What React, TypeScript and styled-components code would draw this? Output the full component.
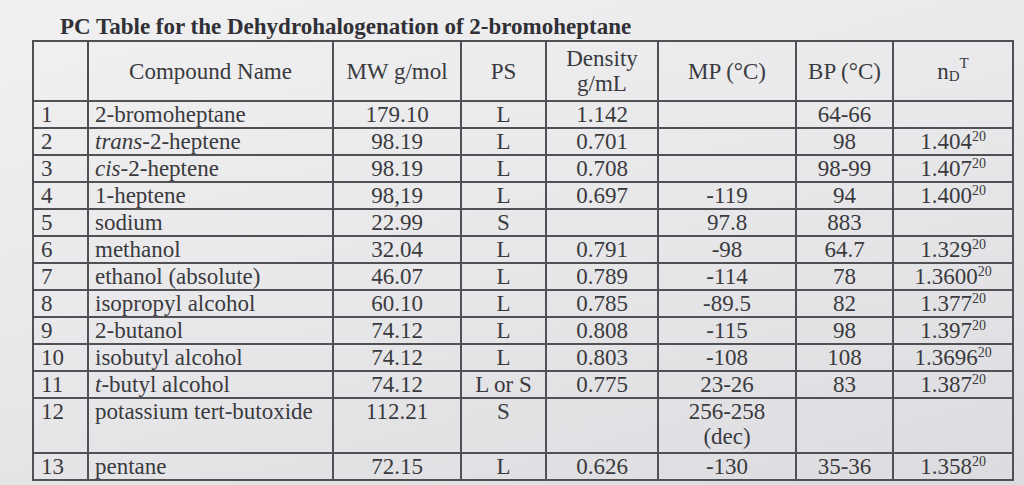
import React from 'react';
import styled, { createGlobalStyle } from 'styled-components';

const GlobalStyle = createGlobalStyle`
    html, body {
        margin: 0;
        padding: 0;
    }
    body {
        background: linear-gradient(165deg, #f1f1f2 0%, #e8e8ea 50%, #dcdce0 100%);
        font-family: 'Liberation Serif', 'Times New Roman', serif;
        color: #333;
        width: 1024px;
        height: 485px;
        overflow: hidden;
    }
`;

type Row = {
    no: string;
    name: React.ReactNode;
    mw: string;
    ps: string;
    density: string;
    mp: React.ReactNode;
    bp: string;
    nd: string;
    tall?: boolean;
};

const rows: Row[] = [
    { no: '1', name: '2-bromoheptane', mw: '179.10', ps: 'L', density: '1.142', mp: '', bp: '64-66', nd: '' },
    { no: '2', name: <><i>trans</i>-2-heptene</>, mw: '98.19', ps: 'L', density: '0.701', mp: '', bp: '98', nd: '1.404' },
    { no: '3', name: <><i>cis</i>-2-heptene</>, mw: '98.19', ps: 'L', density: '0.708', mp: '', bp: '98-99', nd: '1.407' },
    { no: '4', name: '1-heptene', mw: '98,19', ps: 'L', density: '0.697', mp: '-119', bp: '94', nd: '1.400' },
    { no: '5', name: 'sodium', mw: '22.99', ps: 'S', density: '', mp: '97.8', bp: '883', nd: '' },
    { no: '6', name: 'methanol', mw: '32.04', ps: 'L', density: '0.791', mp: '-98', bp: '64.7', nd: '1.329' },
    { no: '7', name: 'ethanol (absolute)', mw: '46.07', ps: 'L', density: '0.789', mp: '-114', bp: '78', nd: '1.3600' },
    { no: '8', name: 'isopropyl alcohol', mw: '60.10', ps: 'L', density: '0.785', mp: '-89.5', bp: '82', nd: '1.377' },
    { no: '9', name: '2-butanol', mw: '74.12', ps: 'L', density: '0.808', mp: '-115', bp: '98', nd: '1.397' },
    { no: '10', name: 'isobutyl alcohol', mw: '74.12', ps: 'L', density: '0.803', mp: '-108', bp: '108', nd: '1.3696' },
    { no: '11', name: <><i>t</i>-butyl alcohol</>, mw: '74.12', ps: 'L or S', density: '0.775', mp: '23-26', bp: '83', nd: '1.387' },
    { no: '12', name: 'potassium tert-butoxide', mw: '112.21', ps: 'S', density: '', mp: <>256-258<br />(dec)</>, bp: '', nd: '', tall: true },
    { no: '13', name: 'pentane', mw: '72.15', ps: 'L', density: '0.626', mp: '-130', bp: '35-36', nd: '1.358' },
];

const colWidths = [55, 245, 128, 85, 112, 138, 97, 120];

export default function App() {
    return (
        <>
            <GlobalStyle />
            <StyledPage>
                <StyledTitle>PC Table for the Dehydrohalogenation of 2-bromoheptane</StyledTitle>
                <StyledTable>
                    <colgroup>
                        {colWidths.map((w, i) => (
                            <col key={i} width={w} />
                        ))}
                    </colgroup>
                    <thead>
                        <StyledHeadRow>
                            <StyledHeadCell />
                            <StyledHeadCell>Compound Name</StyledHeadCell>
                            <StyledHeadCell>MW g/mol</StyledHeadCell>
                            <StyledHeadCell>PS</StyledHeadCell>
                            <StyledHeadCell>
                                Density
                                <br />
                                g/mL
                            </StyledHeadCell>
                            <StyledHeadCell>MP (°C)</StyledHeadCell>
                            <StyledHeadCell>BP (°C)</StyledHeadCell>
                            <StyledHeadCell>
                                n<StyledSub>D</StyledSub>
                                <StyledSup $high>T</StyledSup>
                            </StyledHeadCell>
                        </StyledHeadRow>
                    </thead>
                    <tbody>
                        {rows.map((r) => (
                            <StyledRow key={r.no} $tall={r.tall}>
                                <StyledCell $align="left" $pad={7}>{r.no}</StyledCell>
                                <StyledCell $align="left" $pad={6}>{r.name}</StyledCell>
                                <StyledCell>{r.mw}</StyledCell>
                                <StyledCell>{r.ps}</StyledCell>
                                <StyledCell>{r.density}</StyledCell>
                                <StyledCell>{r.mp}</StyledCell>
                                <StyledCell>{r.bp}</StyledCell>
                                <StyledCell>
                                    {r.nd && (
                                        <>
                                            {r.nd}
                                            <StyledSup>20</StyledSup>
                                        </>
                                    )}
                                </StyledCell>
                            </StyledRow>
                        ))}
                    </tbody>
                </StyledTable>
            </StyledPage>
        </>
    );
}

const StyledPage = styled.div`
    display: flex;
    flex-direction: column;
    padding: 15px 0 0 32px;
`;

const StyledTitle = styled.h1`
    margin: 0 0 2px 28px;
    font-size: 23px;
    line-height: 23px;
    font-weight: bold;
    color: #303036;
`;

const StyledTable = styled.table`
    border-collapse: collapse;
    table-layout: fixed;
    width: 980px;
    font-size: 23px;
    color: #3a3a3e;
    border: 2px solid #505055;
`;

const StyledHeadRow = styled.tr`
    height: 60px;
`;

const StyledHeadCell = styled.th`
    border: 2px solid #505055;
    font-weight: normal;
    line-height: 25px;
    text-align: center;
    vertical-align: middle;
    padding: 0;
`;

const StyledRow = styled.tr<{ $tall?: boolean }>`
    height: ${(p) => (p.$tall ? '55px' : '27px')};
`;

const StyledCell = styled.td<{ $align?: 'left' | 'center'; $pad?: number }>`
    border: 2px solid #505055;
    padding: 0 0 0 ${(p) => p.$pad ?? 0}px;
    text-align: ${(p) => p.$align ?? 'center'};
    vertical-align: top;
    line-height: 25px;
    white-space: nowrap;
    overflow: hidden;
`;

const StyledSup = styled.sup<{ $high?: boolean }>`
    font-size: ${(p) => (p.$high ? '15px' : '14px')};
    line-height: 0;
    vertical-align: ${(p) => (p.$high ? '11px' : '8px')};
`;

const StyledSub = styled.sub`
    font-size: 15px;
    line-height: 0;
    vertical-align: -2px;
`;
